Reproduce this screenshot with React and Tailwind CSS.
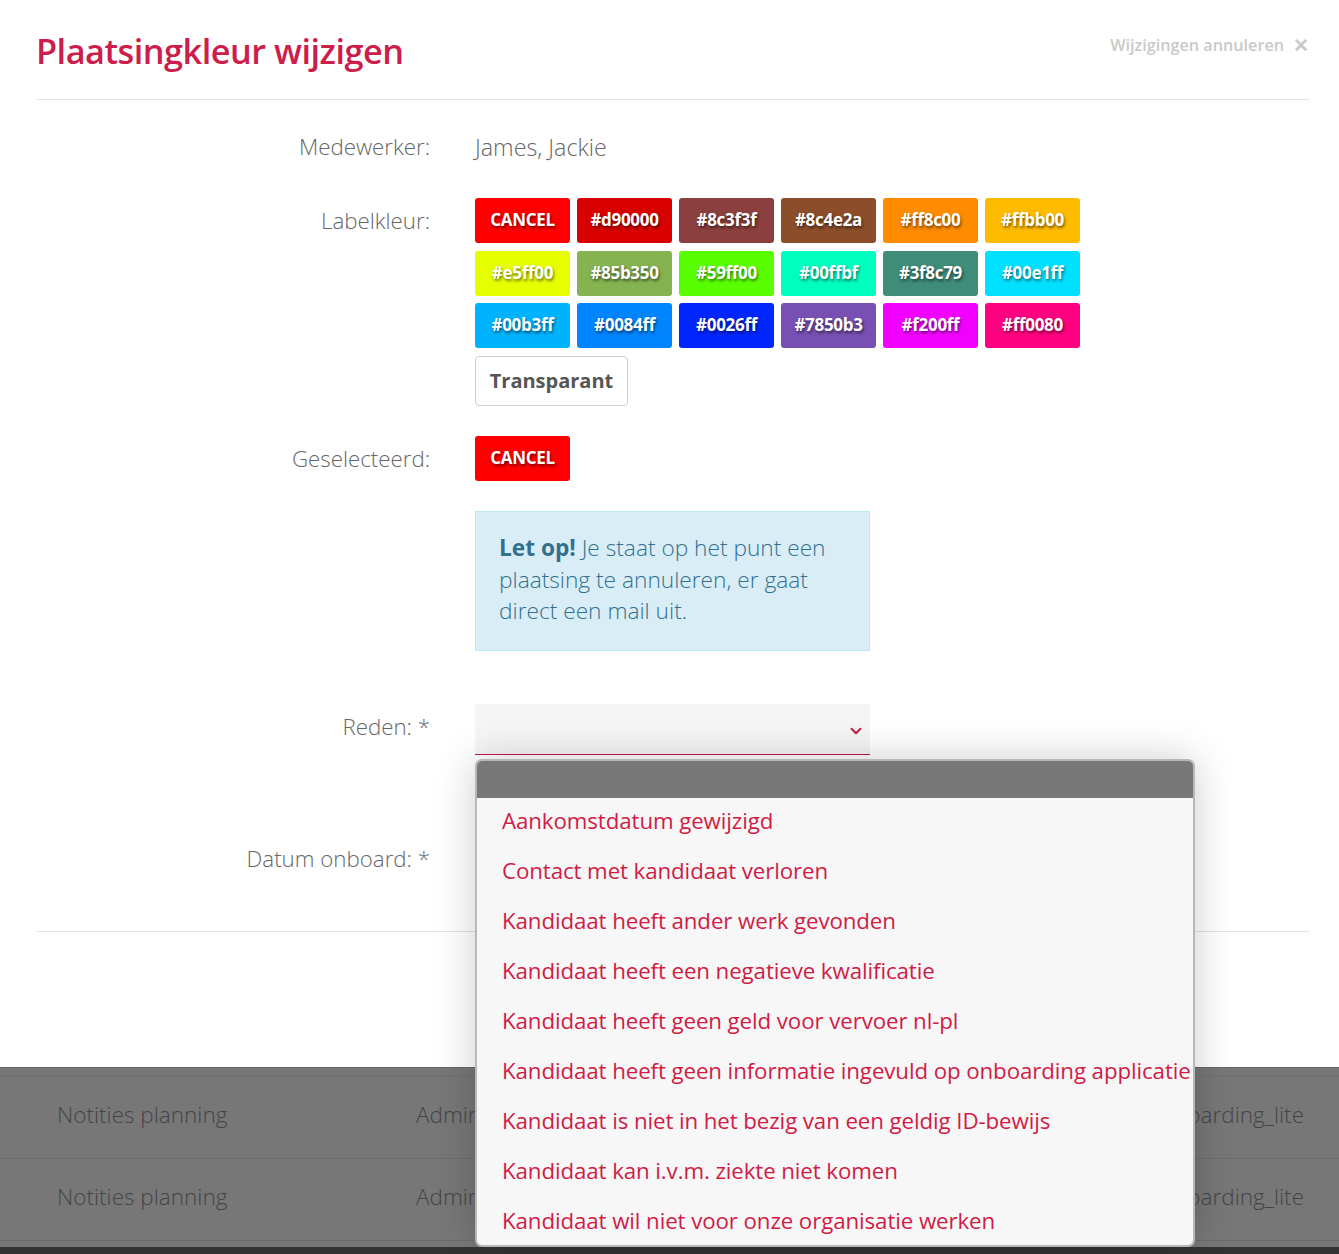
import React from 'react'
import { ChevronDown } from 'lucide-react'

const SWATCHES = [
  { label: 'CANCEL', bg: 'bg-[#ff0000]' },
  { label: '#d90000', bg: 'bg-[#d90000]' },
  { label: '#8c3f3f', bg: 'bg-[#8c3f3f]' },
  { label: '#8c4e2a', bg: 'bg-[#8c4e2a]' },
  { label: '#ff8c00', bg: 'bg-[#ff8c00]' },
  { label: '#ffbb00', bg: 'bg-[#ffbb00]' },
  { label: '#e5ff00', bg: 'bg-[#e5ff00]' },
  { label: '#85b350', bg: 'bg-[#85b350]' },
  { label: '#59ff00', bg: 'bg-[#59ff00]' },
  { label: '#00ffbf', bg: 'bg-[#00ffbf]' },
  { label: '#3f8c79', bg: 'bg-[#3f8c79]' },
  { label: '#00e1ff', bg: 'bg-[#00e1ff]' },
  { label: '#00b3ff', bg: 'bg-[#00b3ff]' },
  { label: '#0084ff', bg: 'bg-[#0084ff]' },
  { label: '#0026ff', bg: 'bg-[#0026ff]' },
  { label: '#7850b3', bg: 'bg-[#7850b3]' },
  { label: '#f200ff', bg: 'bg-[#f200ff]' },
  { label: '#ff0080', bg: 'bg-[#ff0080]' },
]

const REASONS = [
  'Aankomstdatum gewijzigd',
  'Contact met kandidaat verloren',
  'Kandidaat heeft ander werk gevonden',
  'Kandidaat heeft een negatieve kwalificatie',
  'Kandidaat heeft geen geld voor vervoer nl-pl',
  'Kandidaat heeft geen informatie ingevuld op onboarding applicatie',
  'Kandidaat is niet in het bezig van een geldig ID-bewijs',
  'Kandidaat kan i.v.m. ziekte niet komen',
  'Kandidaat wil niet voor onze organisatie werken',
]

function Swatch({ label, bg }) {
  return (
    <div
      className={`${bg} h-[45px] w-[95px] rounded-[3px] flex items-center justify-center pb-px text-white font-bold text-[17px] tracking-[-0.3px] [text-shadow:1px_2px_3px_rgba(0,0,0,0.55)]`}
    >
      {label}
    </div>
  )
}

function Label({ children, className = '' }) {
  return (
    <div className={`w-[394px] shrink-0 flex items-center justify-end text-[22.3px] font-light text-[#666] ${className}`}>
      {children}
    </div>
  )
}

export default function App() {
  return (
    <div className="relative h-[1254px] overflow-hidden bg-white font-['Open_Sans',sans-serif]">
      {/* modal */}
      <div className="h-[1067px] pl-9 pr-[30px]">
        <div className="h-[100px] flex items-center justify-between border-b border-[#e3e3e3]">
          <h1 className="mt-[3px] text-[34.3px] font-semibold tracking-[-0.5px] text-[#cc1d4b]">
            Plaatsingkleur wijzigen
          </h1>
          <div className="-mt-[8px] flex items-center gap-[9px] text-[16.2px] font-semibold text-[#c9c9c9]">
            <span>Wijzigingen annuleren</span>
            <span className="text-[19px] font-bold">✕</span>
          </div>
        </div>

        {/* Medewerker */}
        <div className="flex mt-[32px] h-[30px]">
          <Label>Medewerker:</Label>
          <div className="ml-[45px] flex items-center text-[23.3px] font-light text-[#666]">James, Jackie</div>
        </div>

        {/* Labelkleur */}
        <div className="flex mt-[36px]">
          <Label className="h-[45px]">Labelkleur:</Label>
          <div className="ml-[45px]">
            <div className="grid grid-cols-[repeat(6,95px)] gap-x-[7px] gap-y-[7.5px]">
              {SWATCHES.map((s) => (
                <Swatch key={s.label} {...s} />
              ))}
            </div>
            <div className="mt-[8px] h-[50px] w-[153px] rounded-[4px] border border-[#cfcfcf] flex items-center justify-center text-[20px] font-bold text-[#555]">
              Transparant
            </div>
          </div>
        </div>

        {/* Geselecteerd */}
        <div className="flex mt-[30px]">
          <Label className="h-[45px]">Geselecteerd:</Label>
          <div className="ml-[45px]">
            <Swatch label="CANCEL" bg="bg-[#ff0000]" />
          </div>
        </div>

        {/* Alert */}
        <div className="flex mt-[30px]">
          <div className="w-[394px] shrink-0" />
          <div className="ml-[45px] w-[395px] h-[140px] bg-[#d9edf7] border border-[#bce8f1] px-[23px] pt-[20px] text-[22.7px] leading-[31.5px] font-light text-[#31708f]">
            <span className="font-bold">Let op!</span> Je staat op het punt een plaatsing te annuleren, er gaat direct een mail uit.
          </div>
        </div>

        {/* Reden */}
        <div className="flex mt-[53px]">
          <Label className="h-[46px]">Reden: *</Label>
          <div className="ml-[45px] w-[395px] h-[51px] bg-[#f5f5f5] border-b border-[#c21b45] flex items-center justify-end pr-[5px]">
            <ChevronDown className="w-[18px] h-[18px] mt-[4px] text-[#c21b45]" strokeWidth={2.5} />
          </div>
        </div>

        {/* Datum onboard */}
        <div className="flex mt-[79px]">
          <Label className="h-[50px]">Datum onboard: *</Label>
          <div className="ml-[45px] w-[395px] h-[50px] bg-[#f5f5f5]" />
        </div>

        <div className="mt-[47px] border-t border-[#e3e3e3]" />

        <div className="flex mt-[23px]">
          <div className="w-[394px] shrink-0" />
          <div className="ml-[45px] w-[220px] h-[67px] bg-[#3f9c7e] rounded-[3px]" />
        </div>
      </div>

      {/* dimmed page behind modal */}
      <div className="bg-[#777] border-t border-[#666]">
        <div className="mt-[8px] border-t border-[#6f6f6f]" />
        {[0, 1].map((i) => (
          <div key={i} className="h-[82px] flex items-center pb-[5px] border-b border-[#6d6d6d] text-[22.5px] font-light text-[#454545]">
            <span className="ml-[57px] w-[359px]">Notities planning</span>
            <span className="flex-1">Administratie</span>
            <span className="mr-[35px]">onboarding_lite</span>
          </div>
        ))}
        <div className="h-[6px]" />
        <div className="h-[8px] bg-[#333]" />
      </div>

      {/* open select menu */}
      <div className="absolute left-[475px] top-[759px] w-[720px] h-[488px] rounded-[7px] border-2 border-[#b8b8b8] bg-[#f7f7f7] overflow-hidden shadow-[0_0_40px_rgba(0,0,0,0.2)]">
        <div className="h-[37px] bg-[#787878]" />
        {REASONS.map((r) => (
          <div key={r} className="h-[50px] flex items-center pl-[25px] pb-[5px] whitespace-nowrap text-[22.3px] tracking-[-0.1px] text-[#d01c45]">
            {r}
          </div>
        ))}
      </div>
    </div>
  )
}
